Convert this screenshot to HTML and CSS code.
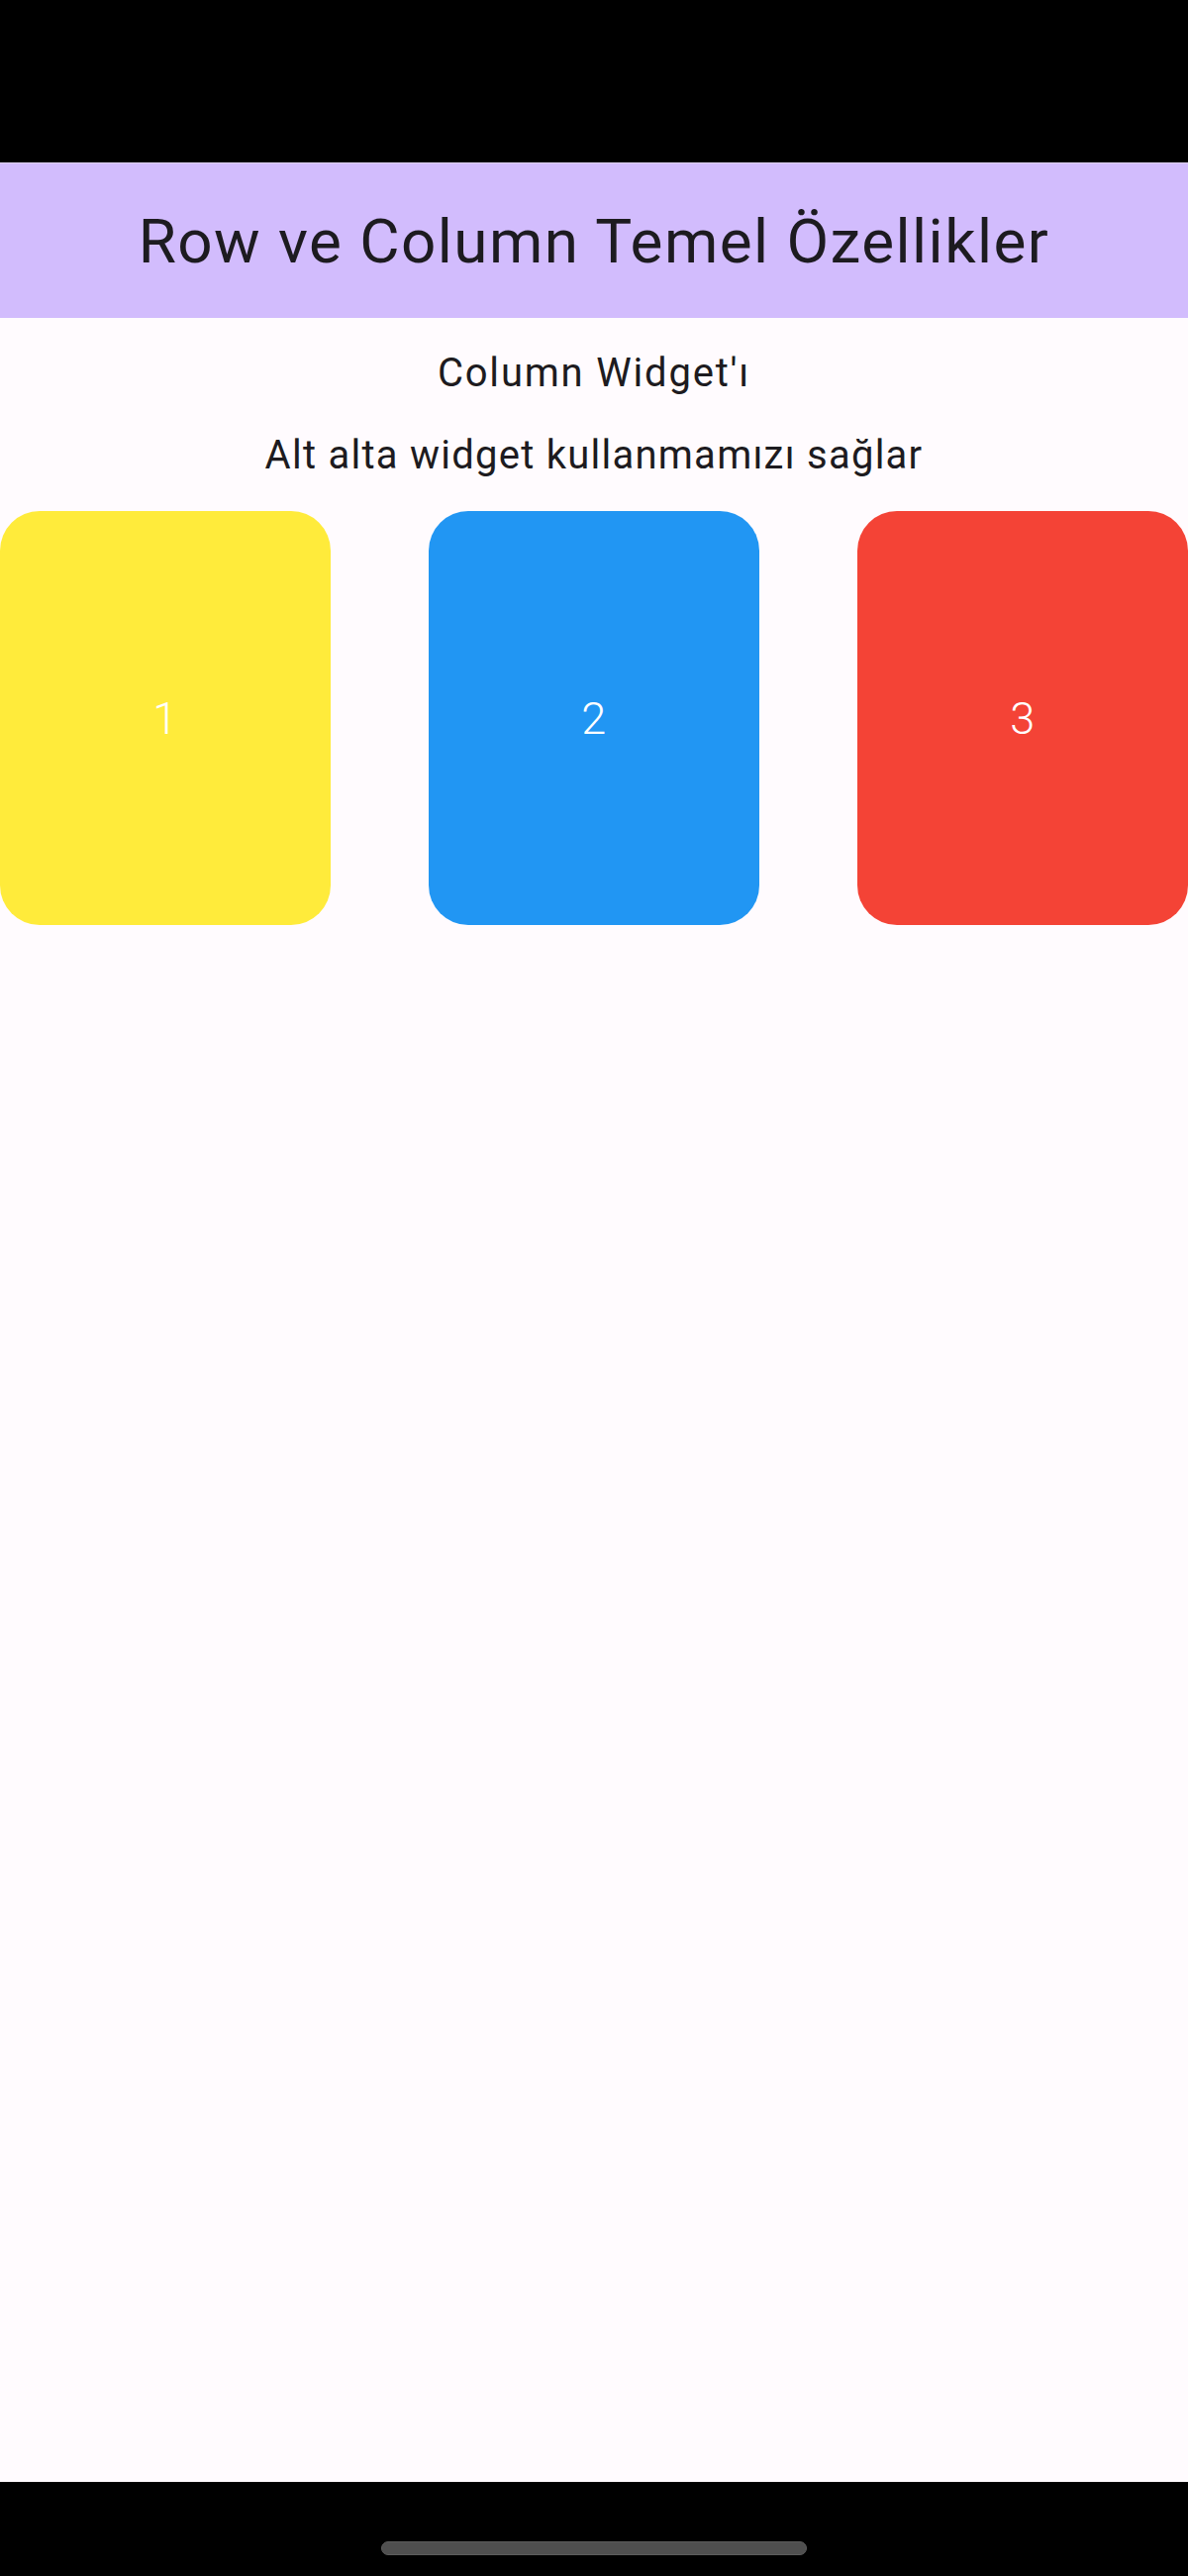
FILE: index.html
```html
<!DOCTYPE html>
<html lang="tr">
<head>
<meta charset="utf-8">
<title>Row ve Column Temel Özellikler</title>
<link rel="stylesheet" href="styles.css">
</head>
<body>
<div class="screen">
  <div class="status-bar"></div>
  <header class="app-bar">
    <h1 class="app-title">Row ve Column Temel Özellikler</h1>
  </header>
  <main class="content">
    <p class="line line-first">Column Widget'ı</p>
    <p class="line line-second">Alt alta widget kullanmamızı sağlar</p>
    <div class="boxes">
      <div class="box box-yellow">1</div>
      <div class="box box-blue">2</div>
      <div class="box box-red">3</div>
    </div>
  </main>
  <footer class="nav-bar">
    <div class="home-indicator"></div>
  </footer>
</div>
</body>
</html>
```

FILE: styles.css
```css
* {
  box-sizing: border-box;
}

html, body {
  margin: 0;
  padding: 0;
  background: #000;
}

body {
  font-family: Roboto, "Noto Sans", sans-serif;
  color: #1d1b20;
}

.screen {
  width: 1200px;
  height: 2601px;
  display: flex;
  flex-direction: column;
  background: #fffbfe;
}

.status-bar {
  height: 164px;
  flex: none;
  background: #000;
}

.app-bar {
  height: 157px;
  flex: none;
  background: #d2bcfd;
  border-top: 1px solid #ddd0f5;
  display: flex;
  align-items: center;
  justify-content: center;
}

.app-title {
  margin: 0;
  font-weight: 400;
  font-size: 62px;
  line-height: 1;
  letter-spacing: 1.45px;
  color: #1d1b20;
  padding-top: 2px;
}

.content {
  flex: 1;
  display: flex;
  flex-direction: column;
  align-items: center;
}

.line {
  margin: 0;
  font-size: 40px;
  line-height: 56px;
  letter-spacing: 1.25px;
  color: #1d1b20;
}

.line-first {
  margin-top: 28px;
  letter-spacing: 1.8px;
}

.line-second {
  margin-top: 27px;
}

.boxes {
  width: 100%;
  margin-top: 28px;
  display: flex;
  justify-content: space-between;
}

.box {
  width: 334px;
  height: 418px;
  border-radius: 40px;
  display: flex;
  align-items: center;
  justify-content: center;
  color: #fff;
  font-size: 45px;
  font-weight: 300;
  letter-spacing: 0.6px;
}

.box-yellow {
  background: #ffeb3b;
}

.box-blue {
  background: #2196f3;
}

.box-red {
  background: #f44336;
}

.nav-bar {
  height: 95px;
  flex: none;
  background: #000;
  display: flex;
  justify-content: center;
}

.home-indicator {
  width: 430px;
  height: 14px;
  margin-top: 60px;
  border-radius: 7px;
  background: #4f4f4f;
  border: 1px solid #5c5c5c;
}
```
